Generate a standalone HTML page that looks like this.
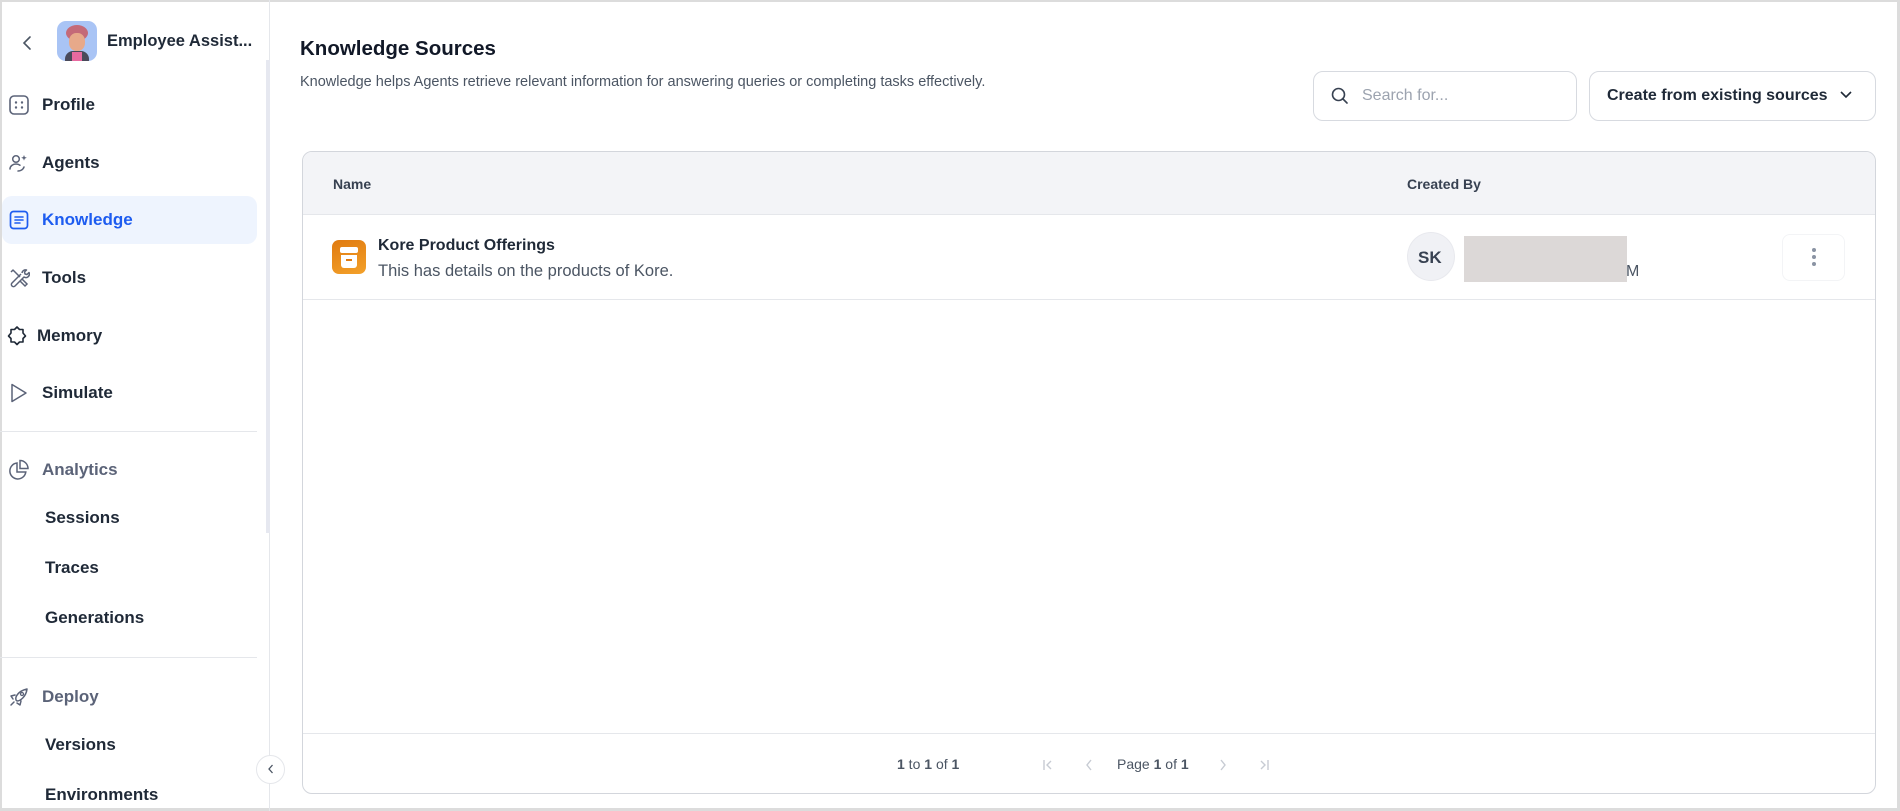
<!DOCTYPE html>
<html><head><meta charset="utf-8"><style>
*{box-sizing:border-box;margin:0;padding:0}
html,body{width:1900px;height:811px;overflow:hidden;background:#fff;font-family:"Liberation Sans",sans-serif;color:#1f2937}
.frame{position:absolute;left:0;top:0;width:1900px;height:811px;border:2px solid #dcdcdc;border-right-width:3px;border-bottom-width:3px}
.side{position:absolute;left:0;top:0;width:270px;height:811px;border-right:1px solid #e5e7eb}
.track{position:absolute;left:266px;top:60px;width:4px;height:473px;background:#e6e8f0}
.abs{position:absolute}
.nav{position:absolute;left:0;width:257px;height:48px;display:flex;align-items:center;font-size:17px;font-weight:600;color:#1f2937}
.nav svg{position:absolute;left:8px}
.nav span{position:absolute;left:42px}
.sub{position:absolute;left:45px;font-size:17px;font-weight:600;color:#1f2937}
.div{position:absolute;left:0;width:257px;height:1px;background:#e5e7eb}
.t{position:absolute;white-space:nowrap}
</style></head><body>
<div class="frame"></div>
<div class="side">
  <div class="track"></div>
  <svg class="abs" style="left:20px;top:34px" width="16" height="18" viewBox="0 0 16 18"><path d="M10 3L4 9l6 6" fill="none" stroke="#4b5563" stroke-width="1.6" stroke-linecap="round"/></svg>
  <div class="abs" style="left:57px;top:21px;width:40px;height:40px;border-radius:9px;background:#a9c4f5;overflow:hidden">
    <div class="abs" style="left:9px;top:4px;width:22px;height:16px;border-radius:50%;background:#c46a78"></div>
    <div class="abs" style="left:12px;top:12px;width:16px;height:18px;border-radius:45%;background:#e7a98a"></div>
    <div class="abs" style="left:8px;top:30px;width:24px;height:12px;border-radius:8px 8px 0 0;background:#4a4a5a"></div>
    <div class="abs" style="left:15px;top:31px;width:10px;height:9px;background:#e86aa0"></div>
  </div>
  <div class="t" style="left:107px;top:32px;font-size:16.5px;font-weight:600;color:#1f2937">Employee Assist...</div>

  <div class="nav" style="top:81px"><svg width="22" height="22" viewBox="0 0 22 22"><rect x="2" y="2" width="18" height="18" rx="4" fill="none" stroke="#5b6378" stroke-width="1.6"/><circle cx="8" cy="8.5" r="1.2" fill="#5b6378"/><circle cx="14" cy="8.5" r="1.2" fill="#5b6378"/><circle cx="8" cy="13.5" r="1.2" fill="#5b6378"/><circle cx="14" cy="13.5" r="1.2" fill="#5b6378"/></svg><span>Profile</span></div>
  <div class="nav" style="top:139px"><svg width="22" height="22" viewBox="0 0 22 22"><circle cx="8" cy="7" r="3.3" fill="none" stroke="#5b6378" stroke-width="1.5"/><path d="M2 17c0-3 3-5 6-5 2 0 3 .5 4 1.2M10 19c2 0 5-1 6-4" fill="none" stroke="#5b6378" stroke-width="1.5" stroke-linecap="round"/><path d="M16 3l.8 2 2 .8-2 .8-.8 2-.8-2-2-.8 2-.8z" fill="#5b6378"/></svg><span>Agents</span></div>
  <div class="nav" style="top:196px;left:2px;width:255px;background:#eef4fe;border-radius:10px;color:#1d5cf0"><svg style="left:6px" width="22" height="22" viewBox="0 0 22 22"><rect x="2.5" y="2.5" width="17" height="17" rx="3" fill="none" stroke="#1d5cf0" stroke-width="1.7"/><path d="M7 8h8M7 11h8M7 14h5" stroke="#1d5cf0" stroke-width="1.6" stroke-linecap="round"/></svg><span style="left:40px">Knowledge</span></div>
  <div class="nav" style="top:254px"><svg width="22" height="22" viewBox="0 0 22 22"><path d="M3 5l2-2 7 7M14 6a3.5 3.5 0 014.5-3l-2 2 .5 2 2 .5 2-2A3.5 3.5 0 0116 10L7 19a2 2 0 01-3-3l9-9" fill="none" stroke="#5b6378" stroke-width="1.5" stroke-linejoin="round"/><path d="M12 14l5 5 2-2-5-5" fill="none" stroke="#5b6378" stroke-width="1.5"/></svg><span>Tools</span></div>
  <div class="nav" style="top:312px"><svg style="left:7px" width="20" height="22" viewBox="0 0 20 22"><path d="M10 2l2.5 2.5h3.5v3.5L18.5 11 16 13.5V17h-3.5L10 19.5 7.5 17H4v-3.5L1.5 11 4 8V4.5h3.5z" fill="none" stroke="#1f2937" stroke-width="1.6" stroke-linejoin="round"/></svg><span style="left:37px">Memory</span></div>
  <div class="nav" style="top:369px"><svg width="22" height="22" viewBox="0 0 22 22"><path d="M4 2.5l14 8.5-14 8.5z" fill="none" stroke="#5b6378" stroke-width="1.5" stroke-linejoin="round"/></svg><span>Simulate</span></div>

  <div class="div" style="top:431px"></div>
  <div class="nav" style="top:446px;color:#5b6378"><svg width="22" height="22" viewBox="0 0 22 22"><path d="M9 4a8 8 0 108.8 9H9z" fill="none" stroke="#5b6378" stroke-width="1.5"/><path d="M12 1.5a8 8 0 018 8h-8z" fill="none" stroke="#5b6378" stroke-width="1.5"/></svg><span>Analytics</span></div>
  <div class="sub" style="top:508px">Sessions</div>
  <div class="sub" style="top:558px">Traces</div>
  <div class="sub" style="top:608px">Generations</div>
  <div class="div" style="top:657px"></div>
  <div class="nav" style="top:673px;color:#5b6378"><svg width="22" height="22" viewBox="0 0 22 22"><path d="M8 14c-1-3 2-9 11-11-1 8-7 12-10 12zM7 9l-4 1 2 3M13 15l-1 4-3-2M6 16l-3 3" fill="none" stroke="#5b6378" stroke-width="1.5" stroke-linejoin="round" stroke-linecap="round"/><circle cx="14" cy="8" r="1.5" fill="none" stroke="#5b6378" stroke-width="1.3"/></svg><span>Deploy</span></div>
  <div class="sub" style="top:735px">Versions</div>
  <div class="sub" style="top:785px">Environments</div>
  <div class="abs" style="left:256px;top:755px;width:29px;height:29px;border-radius:50%;border:1px solid #e5e7eb;background:#fff"></div>
  <svg class="abs" style="left:264px;top:762px" width="14" height="14" viewBox="0 0 14 14"><path d="M8.5 3L5 7l3.5 4" fill="none" stroke="#4b5563" stroke-width="1.3"/></svg>
</div>

<div class="t" style="left:300px;top:37px;font-size:20.5px;font-weight:600;color:#111827">Knowledge Sources</div>
<div class="t" style="left:300px;top:74px;font-size:14.5px;color:#4b5563">Knowledge helps Agents retrieve relevant information for answering queries or completing tasks effectively.</div>

<div class="abs" style="left:1313px;top:71px;width:264px;height:50px;border:1px solid #d7dae0;border-radius:10px"></div>
<svg class="abs" style="left:1330px;top:86px" width="20" height="20" viewBox="0 0 20 20"><circle cx="8.5" cy="8.5" r="6" fill="none" stroke="#374151" stroke-width="1.6"/><path d="M13 13l4 4" stroke="#374151" stroke-width="1.6" stroke-linecap="round"/></svg>
<div class="t" style="left:1362px;top:87px;font-size:16px;color:#9ca3af">Search for...</div>
<div class="abs" style="left:1589px;top:71px;width:287px;height:50px;border:1px solid #d7dae0;border-radius:10px"></div>
<div class="t" style="left:1607px;top:87px;font-size:16px;font-weight:600;color:#1f2937">Create from existing sources</div>
<svg class="abs" style="left:1839px;top:90px" width="14" height="10" viewBox="0 0 14 10"><path d="M2 2l5 5 5-5" fill="none" stroke="#1f2937" stroke-width="1.6"/></svg>

<div class="abs" style="left:302px;top:151px;width:1574px;height:643px;border:1px solid #d3d6dc;border-radius:10px;overflow:hidden">
  <div class="abs" style="left:0;top:0;width:100%;height:63px;background:#f3f4f7;border-bottom:1px solid #e5e7eb"></div>
  <div class="t" style="left:30px;top:24px;font-size:14px;font-weight:600;color:#374151">Name</div>
  <div class="t" style="left:1104px;top:24px;font-size:14px;font-weight:600;color:#374151">Created By</div>
  <div class="abs" style="left:0;top:147px;width:100%;height:1px;background:#e5e7eb"></div>
  <div class="abs" style="left:29px;top:88px;width:34px;height:34px;border-radius:7px;background:linear-gradient(160deg,#e07a10,#f3a12a)"></div>
  <div class="abs" style="left:37px;top:95px;width:18px;height:6px;border-radius:2px;background:#fff"></div>
  <div class="abs" style="left:38px;top:103px;width:16px;height:13px;border-radius:0 0 3px 3px;background:#fff"></div>
  <div class="abs" style="left:43px;top:107px;width:6px;height:2px;background:#e07a10"></div>
  <div class="t" style="left:75px;top:85px;font-size:16px;font-weight:600;color:#1f2937">Kore Product Offerings</div>
  <div class="t" style="left:75px;top:110px;font-size:16.5px;color:#4b5563">This has details on the products of Kore.</div>
  <div class="abs" style="left:1104px;top:80px;width:48px;height:49px;border-radius:50%;background:#f0f1f5;border:1px solid #e8e9ee"></div>
  <div class="t" style="left:1115px;top:96px;font-size:17px;font-weight:600;color:#374151">SK</div>
  <div class="abs" style="left:1161px;top:84px;width:163px;height:46px;background:#dcd8d7"></div>
  <div class="t" style="left:1323px;top:111px;font-size:16px;color:#4b5563">M</div>
  <div class="abs" style="left:1479px;top:82px;width:63px;height:47px;border:1px solid #f3f4f6;border-radius:8px"></div>
  <div class="abs" style="left:1509px;top:96px;width:4px;height:4px;border-radius:50%;background:#8a93a3"></div>
  <div class="abs" style="left:1509px;top:103px;width:4px;height:4px;border-radius:50%;background:#8a93a3"></div>
  <div class="abs" style="left:1509px;top:110px;width:4px;height:4px;border-radius:50%;background:#8a93a3"></div>
  <div class="abs" style="left:0;top:581px;width:100%;height:1px;background:#e5e7eb"></div>
  <div class="t" style="left:594px;top:604px;font-size:14px;color:#4b5563"><b>1</b> to <b>1</b> of <b>1</b></div>
  <svg class="abs" style="left:738px;top:606px" width="14" height="14" viewBox="0 0 14 14"><path d="M3 2v10M10 3L6 7l4 4" fill="none" stroke="#c7cbd3" stroke-width="1.4"/></svg>
  <svg class="abs" style="left:779px;top:606px" width="14" height="14" viewBox="0 0 14 14"><path d="M9 2L5 7l4 5" fill="none" stroke="#c7cbd3" stroke-width="1.4"/></svg>
  <div class="t" style="left:814px;top:604px;font-size:14px;color:#4b5563">Page <b>1</b> of <b>1</b></div>
  <svg class="abs" style="left:913px;top:606px" width="14" height="14" viewBox="0 0 14 14"><path d="M5 2l4 5-4 5" fill="none" stroke="#c7cbd3" stroke-width="1.4"/></svg>
  <svg class="abs" style="left:954px;top:606px" width="14" height="14" viewBox="0 0 14 14"><path d="M11 2v10M4 3l4 4-4 4" fill="none" stroke="#c7cbd3" stroke-width="1.4"/></svg>
</div>
</body></html>
